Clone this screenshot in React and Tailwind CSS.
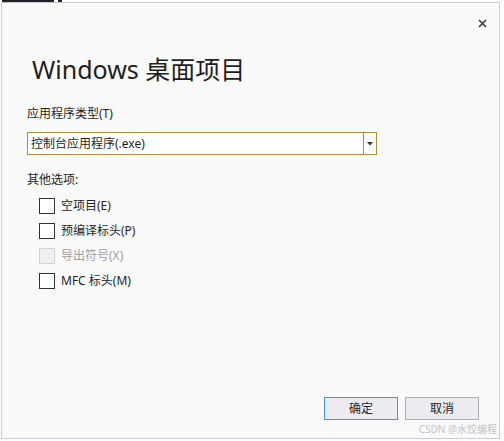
const Check = ({ label, disabled }) => (
  <div className="flex items-center h-[25px]">
    <span
      className={`w-[16px] h-[16px] border ${disabled ? "border-[#d4d4d4] bg-[#f0f0f0]" : "border-[#333] bg-white"}`}
    />
    <span className={`ml-[6px] text-[12px] ${disabled ? "text-[#a0a0a0]" : "text-[#1e1e1e]"}`}>{label}</span>
  </div>
);

export default function App() {
  return (
    <div
      className="w-[504px] h-[441px] bg-white overflow-hidden relative"
      style={{ fontFamily: '"Noto Sans", "Noto Sans CJK SC", sans-serif' }}
    >
      <div className="h-[2px] overflow-hidden flex">
        <div className="w-[52px] h-[2px] bg-[#222] ml-[2px]" />
        <div className="w-[4px] h-[2px] bg-[#222] ml-[4px]" />
      </div>
      <div className="ml-[1px] w-[499px] h-[437px] bg-[#fafafa] border border-[#cbcbdb] flex flex-col relative">
        <div className="flex justify-end pr-[12px] pt-[9px] h-[44px]">
          <svg width="9" height="9" viewBox="0 0 9 9" className="mt-[7px]">
            <path d="M1 1 L8 8 M8 1 L1 8" stroke="#3a3a3a" strokeWidth="1.6" />
          </svg>
        </div>
        <h1 className="ml-[30px] text-[25px] leading-[34px] text-[#1e1e1e] mt-[5px]">Windows 桌面项目</h1>

        <div className="ml-[25px] mt-[20px] text-[12px] leading-[16px] text-[#1e1e1e]">应用程序类型(T)</div>
        <div className="ml-[25px] mt-[10px] w-[350px] h-[23px] border border-[#b58d3a] bg-white flex items-center">
          <span className="flex-1 pl-[3px] text-[12px] text-[#1e1e1e]">控制台应用程序(.exe)</span>
          <span className="w-[13px] h-full border-l border-[#b58d3a] flex items-center justify-center">
            <svg width="6" height="4" viewBox="0 0 6 4">
              <path d="M0 0 H6 L3 3.5 Z" fill="#333" />
            </svg>
          </span>
        </div>

        <div className="ml-[25px] mt-[17px] text-[12px] leading-[16px] text-[#1e1e1e]">其他选项:</div>
        <div className="ml-[37px] mt-[5px] flex flex-col">
          <Check label="空项目(E)" />
          <Check label="预编译标头(P)" />
          <Check label="导出符号(X)" disabled />
          <Check label="MFC 标头(M)" />
        </div>

        <div className="mt-auto mb-[18px] flex justify-end gap-[7px] pr-[20px]">
          <button className="w-[74px] h-[23px] border border-[#3c98e6] bg-[#ececf0] text-[12px] text-[#1e1e1e]">确定</button>
          <button className="w-[74px] h-[23px] border border-[#adadad] bg-[#ececf0] text-[12px] text-[#1e1e1e]">取消</button>
        </div>
        <div className="absolute right-[2px] bottom-[3px] text-[10px] text-[#c4c4c4] leading-[12px]">CSDN @水饺编程</div>
      </div>
    </div>
  );
}
